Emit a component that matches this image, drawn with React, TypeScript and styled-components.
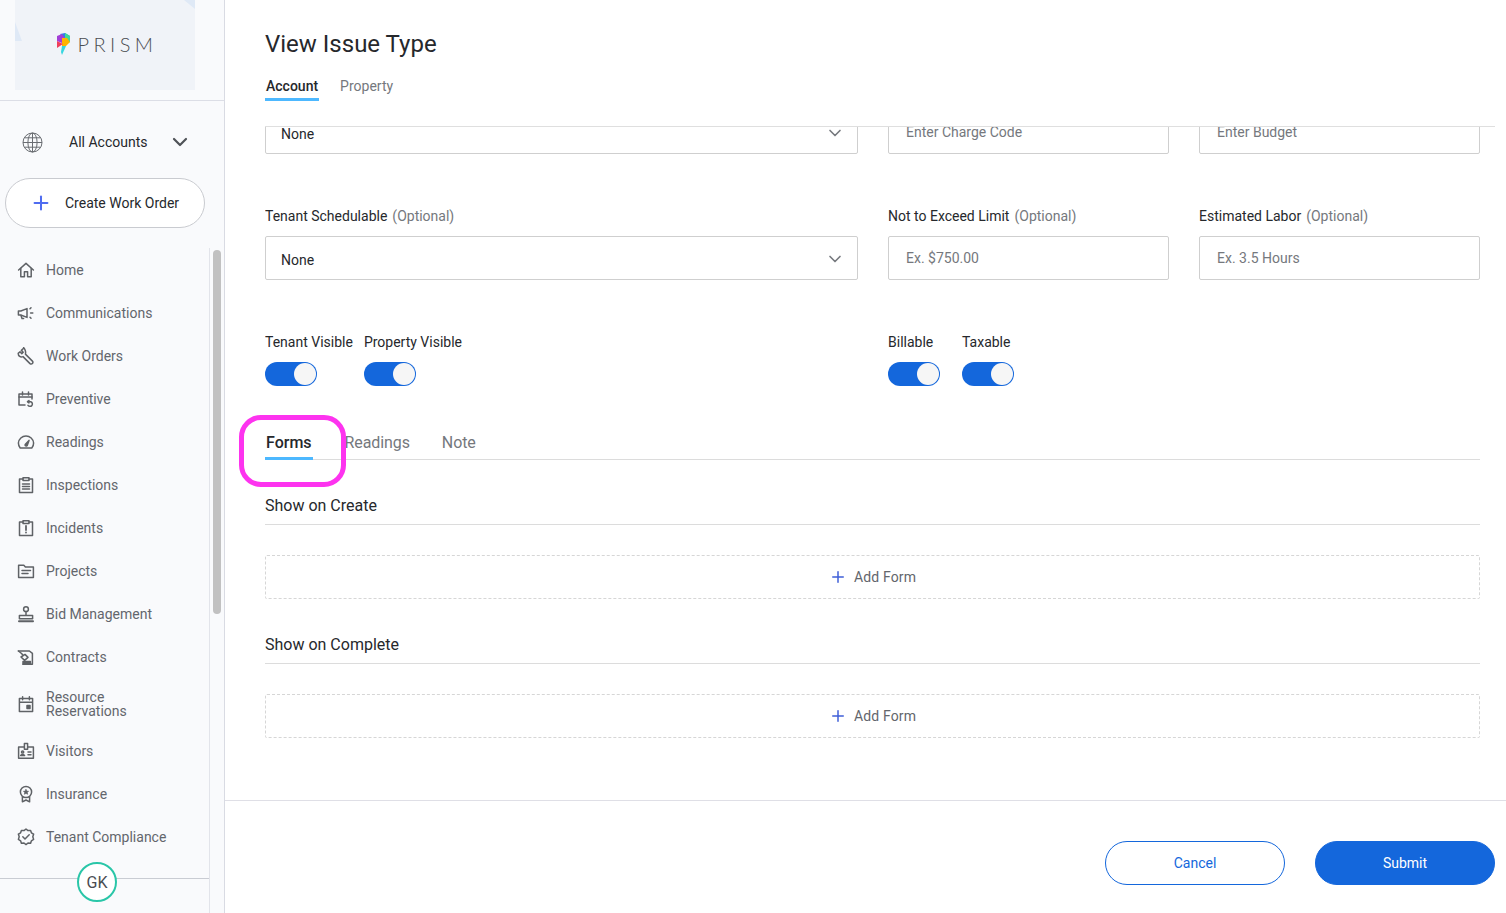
import type { ReactNode } from 'react';
import styled, { createGlobalStyle } from 'styled-components';
import { ChevronDown, Plus } from 'lucide-react';

const GlobalStyle = createGlobalStyle`
  html, body {
    margin: 0;
    height: 100%;
    overflow: hidden;
    background: #fff;
    font-family: Roboto, "Liberation Sans", sans-serif;
  }
  * { box-sizing: border-box; }
`;

const Page = styled.div`
  display: flex;
  width: 1506px;
  height: 913px;
  overflow: hidden;
`;

const Sidebar = styled.aside`
  flex: 0 0 225px;
  display: flex;
  flex-direction: column;
  height: 100%;
  background: #f9fafc;
  border-right: 1px solid #d9dbe3;
`;

const LogoArea = styled.div`
  flex: 0 0 101px;
  padding: 0 29px 10px 15px;
  border-bottom: 1px solid #dcdee6;
`;

const LogoBox = styled.div`
  position: relative;
  display: flex;
  align-items: center;
  justify-content: center;
  gap: 7px;
  height: 90px;
  padding: 0 0 3px 0;
  background: #f0f3f8;
  overflow: hidden;
`;

const LogoCorner = styled.svg<{ $side: 'left' | 'right' }>`
  position: absolute;
  ${({ $side }) => ($side === 'left' ? 'left: 0; top: 22px;' : 'right: 0; top: 0;')}
`;

const LogoText = styled.span`
  font-family: Lato, sans-serif;
  font-weight: 300;
  font-size: 20px;
  letter-spacing: 4.4px;
  margin-right: -4px;
  color: #4a4d52;
`;

const AccountRow = styled.div`
  display: flex;
  align-items: center;
  height: 28px;
  margin-top: 27px;
  padding: 0 32px 0 22px;
  font-size: 14px;
  color: #26282c;
`;

const AccountName = styled.span`
  flex: 1;
  margin-left: 26px;
`;

const CreateButton = styled.button`
  display: flex;
  align-items: center;
  gap: 13px;
  width: 200px;
  height: 50px;
  margin: 22px 0 0 5px;
  padding: 0 0 0 24px;
  background: #fff;
  border: 1px solid #c9cbd0;
  border-radius: 25px;
  font: 14px Roboto, sans-serif;
  color: #26282c;
`;

const SidebarBody = styled.div`
  flex: 1;
  display: flex;
  min-height: 0;
  margin-top: 20px;
`;

const NavColumn = styled.div`
  position: relative;
  flex: 0 0 210px;
  border-right: 1px solid #e2e4ea;
`;

const NavList = styled.nav`
  display: flex;
  flex-direction: column;
`;

const NavItem = styled.a<{ $tall?: boolean }>`
  display: flex;
  align-items: center;
  gap: 11px;
  height: ${({ $tall }) => ($tall ? '51px' : '43px')};
  padding-left: 17px;
  font-size: 14px;
  line-height: 14px;
  color: #63666c;
  svg { flex: 0 0 18px; }
`;

const NavFooter = styled.div`
  position: absolute;
  left: 0;
  right: 0;
  top: 630px;
  border-top: 1px solid #c9ccd3;
`;

const Avatar = styled.div`
  position: absolute;
  left: 77px;
  top: -17px;
  display: flex;
  align-items: center;
  justify-content: center;
  width: 40px;
  height: 40px;
  background: #fff;
  border: 2px solid #2ac6a8;
  border-radius: 50%;
  font-size: 16px;
  color: #4a4d52;
`;

const ScrollTrack = styled.div`
  flex: 1;
  padding: 2px 3px 0 3px;
`;

const ScrollThumb = styled.div`
  height: 364px;
  background: #c1c1c1;
  border-radius: 4px;
`;

const Main = styled.main`
  flex: 1;
  display: flex;
  flex-direction: column;
  min-width: 0;
`;

const Header = styled.header`
  flex: 0 0 126px;
  padding: 30px 0 0 40px;
`;

const Title = styled.h1`
  margin: 0;
  font-size: 24px;
  line-height: 28px;
  font-weight: 400;
  color: #26282c;
`;

const TabBar = styled.div<{ $ruled?: boolean; $gap: number }>`
  display: flex;
  gap: ${({ $gap }) => $gap}px;
  ${({ $ruled }) => ($ruled ? 'border-bottom: 1px solid #dcdcdc;' : '')}
`;

const TopTabs = styled(TabBar)`
  margin-top: 14px;
`;

const SmallTab = styled.span<{ $active?: boolean }>`
  height: 29px;
  padding: 4px 1px 0;
  font-size: 14px;
  line-height: 20px;
  font-weight: ${({ $active }) => ($active ? 500 : 400)};
  color: ${({ $active }) => ($active ? '#26282c' : '#75787d')};
  border-bottom: 3px solid ${({ $active }) => ($active ? '#4db8ff' : 'transparent')};
`;

const FormArea = styled.div`
  flex: 0 0 674px;
  margin-left: 40px;
  margin-right: 11px;
  border-top: 1px solid #dfdfdf;
  overflow: hidden;
`;

const FormInner = styled.div`
  position: relative;
  width: 1215px;
  margin-top: -17px;
`;

const FieldGrid = styled.div`
  display: grid;
  grid-template-columns: 593px 281px 281px;
  column-gap: 30px;
`;

const SecondGrid = styled(FieldGrid)`
  margin-top: 46px;
`;

const Field = styled.div`
  display: flex;
  flex-direction: column;
`;

const Label = styled.label`
  height: 36px;
  padding-top: 6px;
  font-size: 14px;
  line-height: 20px;
  color: #26282c;
`;

const Optional = styled.span`
  margin-left: 5px;
  color: #75787d;
`;

const SelectBox = styled.div`
  display: flex;
  align-items: center;
  justify-content: space-between;
  height: 44px;
  padding: 4px 12px 0 15px;
  border: 1px solid #cfcfcf;
  border-radius: 2px;
  font-size: 14px;
  color: #26282c;
  svg { margin-top: -2px; }
`;

const TextInput = styled.input`
  height: 44px;
  width: 100%;
  padding: 0 17px 1px;
  border: 1px solid #cfcfcf;
  border-radius: 2px;
  outline: none;
  font: 14px Roboto, sans-serif;
  &::placeholder { color: #75787d; opacity: 1; }
`;

const ToggleRow = styled.div`
  display: grid;
  grid-template-columns: 593px auto;
  column-gap: 30px;
  margin-top: 52px;
`;

const ToggleGroup = styled.div<{ $gap: number }>`
  display: flex;
  gap: ${({ $gap }) => $gap}px;
`;

const ToggleField = styled.div`
  display: flex;
  flex-direction: column;
  gap: 10px;
  font-size: 14px;
  line-height: 20px;
  color: #26282c;
`;

const Toggle = styled.span`
  display: flex;
  justify-content: flex-end;
  align-items: center;
  width: 52px;
  height: 24px;
  padding-right: 1px;
  background: #1467dc;
  border-radius: 12px;
`;

const Knob = styled.span`
  width: 22px;
  height: 22px;
  background: #f6f6f6;
  border-radius: 50%;
`;

const FormTabs = styled(TabBar)`
  margin-top: 29px;
`;

const BigTab = styled.span<{ $active?: boolean }>`
  height: 45px;
  padding: 18px ${({ $active }) => ($active ? '1px' : '0')} 0;
  font-size: 16px;
  line-height: 20px;
  margin-bottom: -1px;
  letter-spacing: ${({ $active }) => ($active ? '0' : '-0.1px')};
  font-weight: ${({ $active }) => ($active ? 500 : 400)};
  color: ${({ $active }) => ($active ? '#26282c' : '#75787d')};
  border-bottom: 3px solid ${({ $active }) => ($active ? '#4db8ff' : 'transparent')};
`;

const Section = styled.section`
  margin-top: 35px;
`;

const SectionTitle = styled.h2`
  margin: 0;
  height: 30px;
  border-bottom: 1px solid #dcdcdc;
  font-size: 16px;
  line-height: 22px;
  font-weight: 400;
  color: #26282c;
`;

const AddForm = styled.button`
  display: flex;
  align-items: center;
  justify-content: center;
  gap: 7px;
  width: 100%;
  height: 44px;
  margin-top: 30px;
  background: #fff;
  border: 1px dashed #d6d6d6;
  border-radius: 2px;
  font: 14px Roboto, sans-serif;
  letter-spacing: 0.15px;
  color: #63666c;
`;

const Highlight = styled.div`
  position: absolute;
  left: 239px;
  top: 415px;
  width: 107px;
  height: 72px;
  border: 5px solid #fd33ef;
  border-radius: 22px;
  pointer-events: none;
`;

const Footer = styled.footer`
  flex: 1;
  display: flex;
  justify-content: flex-end;
  gap: 30px;
  padding: 40px 11px 0 0;
  border-top: 1px solid #dfdfe6;
`;

const ActionButton = styled.button<{ $primary?: boolean }>`
  width: 180px;
  height: 44px;
  border: 1px solid #1467dc;
  border-radius: 22px;
  font: 14px Roboto, sans-serif;
  background: ${({ $primary }) => ($primary ? '#1467dc' : '#fff')};
  color: ${({ $primary }) => ($primary ? '#fff' : '#1467dc')};
`;

const NavGlyph = ({ children }: { children: ReactNode }) => (
  <svg width="18" height="18" viewBox="0 0 18 18" fill="none" stroke="#5f6266" strokeWidth="1.5" strokeLinejoin="round" strokeLinecap="round">
    {children}
  </svg>
);

const navItems: { label: ReactNode; icon: ReactNode; tall?: boolean }[] = [
  {
    label: 'Home',
    icon: (
      <NavGlyph>
        <path d="M1.6 9 9 2.4 16.4 9" />
        <path d="M3.8 7.6v8.2h3.6v-5h3.2v5h3.6V7.6" />
      </NavGlyph>
    ),
  },
  {
    label: 'Communications',
    icon: (
      <NavGlyph>
        <path d="M1.4 7v4h2.4l6.2 2.4V4.6L3.8 7H1.4z" />
        <path d="M4 11.4 5 14.4h1.6" />
        <path d="M13 4.8l1-1M13.6 9h2.2M13 13.2l1 1" />
      </NavGlyph>
    ),
  },
  {
    label: 'Work Orders',
    icon: (
      <NavGlyph>
        <path d="M6.6 1.2 4.4 3.4l1.8 1.8-1.4 1.4L3 4.8 1.2 6.4c0 2.6 2.4 4.2 4.8 3.2l7 7c.8.6 1.8.5 2.4-.1.7-.7.7-1.7 0-2.4l-7-7c.8-2.4-.8-5.7-1.8-6.5z" />
      </NavGlyph>
    ),
  },
  {
    label: 'Preventive',
    icon: (
      <NavGlyph>
        <path d="M8 15H2V4h13v5" />
        <path d="M2 7h13M5.5 2v3M11.5 2v3" />
        <path d="M12 10.5l-1.5 1.2 1.5 1.2" />
        <path d="M10.8 11.7h3a2.4 2.4 0 1 1-2.8 3.6" />
      </NavGlyph>
    ),
  },
  {
    label: 'Readings',
    icon: (
      <NavGlyph>
        <path d="M3.2 15h11.6A7.6 7.6 0 0 0 16.6 10 7.6 7.6 0 0 0 9 3a7.6 7.6 0 0 0-7.6 7c0 1.9.7 3.6 1.8 5z" />
        <path d="M8.2 11.6 12 7.4l-1.8 5.2c-.6.8-2.6.2-2-1z" fill="#5f6266" />
      </NavGlyph>
    ),
  },
  {
    label: 'Inspections',
    icon: (
      <NavGlyph>
        <path d="M6 3H2.5v13.5h13V3H12" />
        <path d="M6 1.8h6v2.7H6z" />
        <path d="M5.5 8h7M5.5 10.5h7M5.5 13h7" />
      </NavGlyph>
    ),
  },
  {
    label: 'Incidents',
    icon: (
      <NavGlyph>
        <path d="M6 3H2.5v13.5h13V3H12" />
        <path d="M6 1.8h6v2.7H6z" />
        <path d="M9 7v4M9 13.4v.2" strokeWidth="1.8" />
      </NavGlyph>
    ),
  },
  {
    label: 'Projects',
    icon: (
      <NavGlyph>
        <path d="M1.6 15.4V3.2h5.2l1.6 1.8h8v10.4z" />
        <path d="M5 8.4h8.5M5 11.6h6" />
      </NavGlyph>
    ),
  },
  {
    label: 'Bid Management',
    icon: (
      <NavGlyph>
        <circle cx="9" cy="4.2" r="2.4" />
        <path d="M9 6.6v3M2.4 10.4h13.2v3.4H2.4z" />
        <path d="M2 16.2h14" strokeWidth="2" />
      </NavGlyph>
    ),
  },
  {
    label: 'Contracts',
    icon: (
      <NavGlyph>
        <path d="M1.4 3h11l3 2.4v10.8H6" />
        <path d="M1.4 3c1.8 1.2 3.4 2.6 5 4.4M4 9l4-2.6 3 3-3.4 3z" />
        <path d="M6 13.4h7.4v2.8H6z" fill="#5f6266" />
      </NavGlyph>
    ),
  },
  {
    label: (
      <span>
        Resource
        <br />
        Reservations
      </span>
    ),
    tall: true,
    icon: (
      <NavGlyph>
        <path d="M2.4 3.6h13.2v13H2.4zM2.4 7.2h13.2M5.6 1.8v3M12.4 1.8v3" />
        <path d="M10 10.6h3v3h-3z" fill="#5f6266" />
      </NavGlyph>
    ),
  },
  {
    label: 'Visitors',
    icon: (
      <NavGlyph>
        <path d="M7 5H1.6v11.2h14.8V5H11" />
        <path d="M7.4 1.6h3.2v5.6H7.4z" />
        <circle cx="5.6" cy="10" r="1.1" />
        <path d="M3.6 13.6c.4-1.6 3.6-1.6 4 0zM11 10h3M11 12.8h3" />
      </NavGlyph>
    ),
  },
  {
    label: 'Insurance',
    icon: (
      <NavGlyph>
        <circle cx="9" cy="7" r="5.6" />
        <path d="M9 4.4l.8 1.7 1.8.2-1.3 1.2.4 1.8-1.7-.9-1.7.9.4-1.8-1.3-1.2 1.8-.2z" fill="#5f6266" strokeWidth="0.6" />
        <path d="M5.4 12v4.8L9 15l3.6 1.8V12" />
      </NavGlyph>
    ),
  },
  {
    label: 'Tenant Compliance',
    icon: (
      <NavGlyph>
        <path d="M9 1l2 1.6 2.6-.2.8 2.4 2.2 1.4-.8 2.6.8 2.6-2.2 1.4-.8 2.4-2.6-.2L9 16.6l-2-1.6-2.6.2-.8-2.4-2.2-1.4.8-2.6-.8-2.6 2.2-1.4.8-2.4 2.6.2z" />
        <path d="M5.8 8.8l2.2 2.2 4.2-4.2" />
      </NavGlyph>
    ),
  },
];

const Caret = () => <ChevronDown size={20} color="#76797e" strokeWidth={2} />;

export default function App() {
  return (
    <Page>
      <GlobalStyle />
      <Sidebar>
        <LogoArea>
          <LogoBox>
            <LogoCorner $side="left" width="8" height="20" viewBox="0 0 8 20">
              <path d="M0 0 7 19H0z" fill="#dfe9f6" />
            </LogoCorner>
            <LogoCorner $side="right" width="11" height="9" viewBox="0 0 11 9">
              <path d="M0 0h11v9z" fill="#dfe9f6" />
            </LogoCorner>
            <svg width="14" height="22" viewBox="0 0 14 22">
              <path d="M3 1 8 0 13 3v6L8 7z" fill="#2f7fe8" />
              <path d="M8 0l5 3v6L8 12z" fill="#3ddc97" />
              <path d="M0 3l5-2 3 4-3 5-5-2z" fill="#a23ed6" />
              <path d="M5 5h5l3 4-4 4H5z" fill="#ffb300" />
              <path d="M0 8l6 3-6 4z" fill="#ef3e5c" />
              <path d="M5 13h4l-4 9-1-3z" fill="#35d6e0" />
            </svg>
            <LogoText>PRISM</LogoText>
          </LogoBox>
        </LogoArea>
        <AccountRow>
          <svg width="21" height="21" viewBox="0 0 21 21" fill="none" stroke="#6a6d72" strokeWidth="1">
            <circle cx="10.5" cy="10.5" r="9.5" />
            <ellipse cx="10.5" cy="10.5" rx="4.6" ry="9.5" />
            <path d="M10.5 1v19M1 10.5h19M2.4 5.8h16.2M2.4 15.2h16.2" />
          </svg>
          <AccountName>All Accounts</AccountName>
          <ChevronDown size={24} color="#4f5257" strokeWidth={2.2} />
        </AccountRow>
        <CreateButton>
          <Plus size={22} color="#4f6cf0" strokeWidth={2.2} />
          Create Work Order
        </CreateButton>
        <SidebarBody>
          <NavColumn>
            <NavList>
              {navItems.map((item, idx) => (
                <NavItem key={idx} $tall={item.tall}>
                  {item.icon}
                  {item.label}
                </NavItem>
              ))}
            </NavList>
            <NavFooter>
              <Avatar>GK</Avatar>
            </NavFooter>
          </NavColumn>
          <ScrollTrack>
            <ScrollThumb />
          </ScrollTrack>
        </SidebarBody>
      </Sidebar>
      <Main>
        <Header>
          <Title>View Issue Type</Title>
          <TopTabs $gap={20}>
            <SmallTab $active>Account</SmallTab>
            <SmallTab>Property</SmallTab>
          </TopTabs>
        </Header>
        <FormArea>
          <FormInner>
            <FieldGrid>
              <SelectBox>
                None
                <Caret />
              </SelectBox>
              <TextInput placeholder="Enter Charge Code" />
              <TextInput placeholder="Enter Budget" />
            </FieldGrid>
            <SecondGrid>
              <Field>
                <Label>
                  Tenant Schedulable<Optional>(Optional)</Optional>
                </Label>
                <SelectBox>
                  None
                  <Caret />
                </SelectBox>
              </Field>
              <Field>
                <Label>
                  Not to Exceed Limit<Optional>(Optional)</Optional>
                </Label>
                <TextInput placeholder="Ex. $750.00" />
              </Field>
              <Field>
                <Label>
                  Estimated Labor<Optional>(Optional)</Optional>
                </Label>
                <TextInput placeholder="Ex. 3.5 Hours" />
              </Field>
            </SecondGrid>
            <ToggleRow>
              <ToggleGroup $gap={11}>
                <ToggleField>
                  Tenant Visible
                  <Toggle><Knob /></Toggle>
                </ToggleField>
                <ToggleField>
                  Property Visible
                  <Toggle><Knob /></Toggle>
                </ToggleField>
              </ToggleGroup>
              <ToggleGroup $gap={22}>
                <ToggleField>
                  Billable
                  <Toggle><Knob /></Toggle>
                </ToggleField>
                <ToggleField>
                  Taxable
                  <Toggle><Knob /></Toggle>
                </ToggleField>
              </ToggleGroup>
            </ToggleRow>
            <FormTabs $ruled $gap={32}>
              <BigTab $active>Forms</BigTab>
              <BigTab>Readings</BigTab>
              <BigTab>Note</BigTab>
            </FormTabs>
            <Section>
              <SectionTitle>Show on Create</SectionTitle>
              <AddForm>
                <Plus size={18} color="#3f5fd8" strokeWidth={2} />
                Add Form
              </AddForm>
            </Section>
            <Section>
              <SectionTitle>Show on Complete</SectionTitle>
              <AddForm>
                <Plus size={18} color="#3f5fd8" strokeWidth={2} />
                Add Form
              </AddForm>
            </Section>
          </FormInner>
        </FormArea>
        <Footer>
          <ActionButton>Cancel</ActionButton>
          <ActionButton $primary>Submit</ActionButton>
        </Footer>
      </Main>
      <Highlight />
    </Page>
  );
}
